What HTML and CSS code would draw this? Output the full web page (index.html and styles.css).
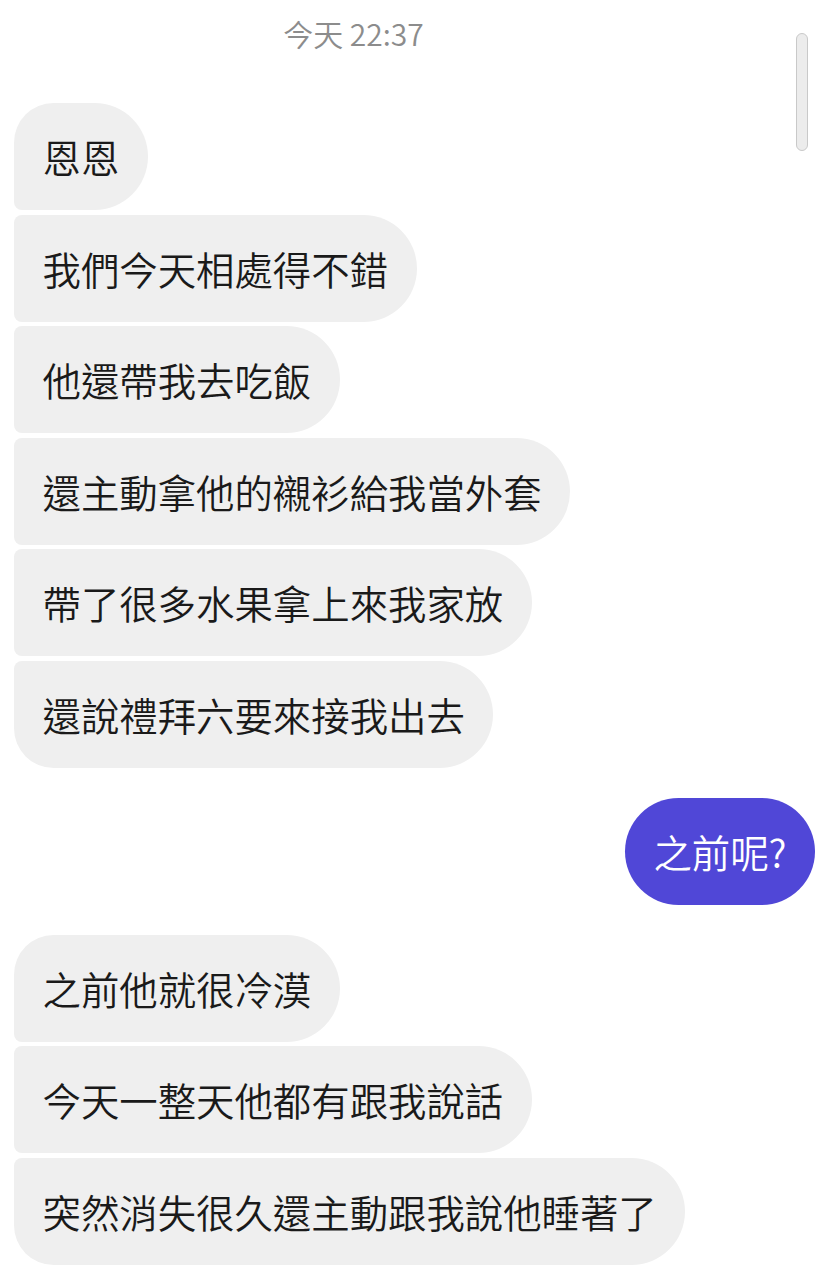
FILE: index.html
```html
<!DOCTYPE html>
<html lang="zh-Hant">
<head>
<meta charset="utf-8">
<link rel="stylesheet" href="styles.css">
</head>
<body>
<div class="screen">
  <div class="time">今天 22:37</div>
  <div class="group in">
    <div class="bubble first">恩恩</div>
    <div class="bubble">我們今天相處得不錯</div>
    <div class="bubble">他還帶我去吃飯</div>
    <div class="bubble">還主動拿他的襯衫給我當外套</div>
    <div class="bubble">帶了很多水果拿上來我家放</div>
    <div class="bubble last">還說禮拜六要來接我出去</div>
  </div>
  <div class="group out">
    <div class="bubble mine">之前呢?</div>
  </div>
  <div class="group in">
    <div class="bubble first">之前他就很冷漠</div>
    <div class="bubble">今天一整天他都有跟我說話</div>
    <div class="bubble last">突然消失很久還主動跟我說他睡著了</div>
  </div>
  <div class="scrollbar"></div>
</div>
</body>
</html>
```
FILE: styles.css
```css
html, body {
  margin: 0;
  padding: 0;
  background: #ffffff;
}
.screen {
  position: relative;
  width: 835px;
  height: 1280px;
  overflow: hidden;
  box-sizing: border-box;
  padding: 13px 20px 0 14px;
  font-family: "Noto Sans CJK TC", "Noto Sans", sans-serif;
  display: flex;
  flex-direction: column;
}
.time {
  font-size: 30px;
  line-height: 40px;
  font-weight: 350;
  color: #8c8c8c;
  text-align: center;
  padding-right: 122px;
  margin-bottom: 50px;
}
.group {
  display: flex;
  flex-direction: column;
  gap: 4.5px;
  margin-bottom: 30px;
}
.group.in { align-items: flex-start; }
.group.out { align-items: flex-end; }
.bubble {
  font-size: 38.4px;
  line-height: 49px;
  font-weight: 350;
  padding: 29px 28.5px;
  background: #efefef;
  color: #1a1a1a;
  border-radius: 8px 54px 54px 8px;
  white-space: nowrap;
}
.bubble.first { border-top-left-radius: 40px; }
.bubble.last { border-bottom-left-radius: 40px; }
.bubble.mine {
  background: #5047d7;
  color: #ffffff;
  border-radius: 54px;
}
.scrollbar {
  position: absolute;
  left: 796px;
  top: 33px;
  width: 10px;
  height: 116px;
  border: 1.5px solid #c9c9c9;
  border-radius: 7px;
  background: #ececec;
}
```
